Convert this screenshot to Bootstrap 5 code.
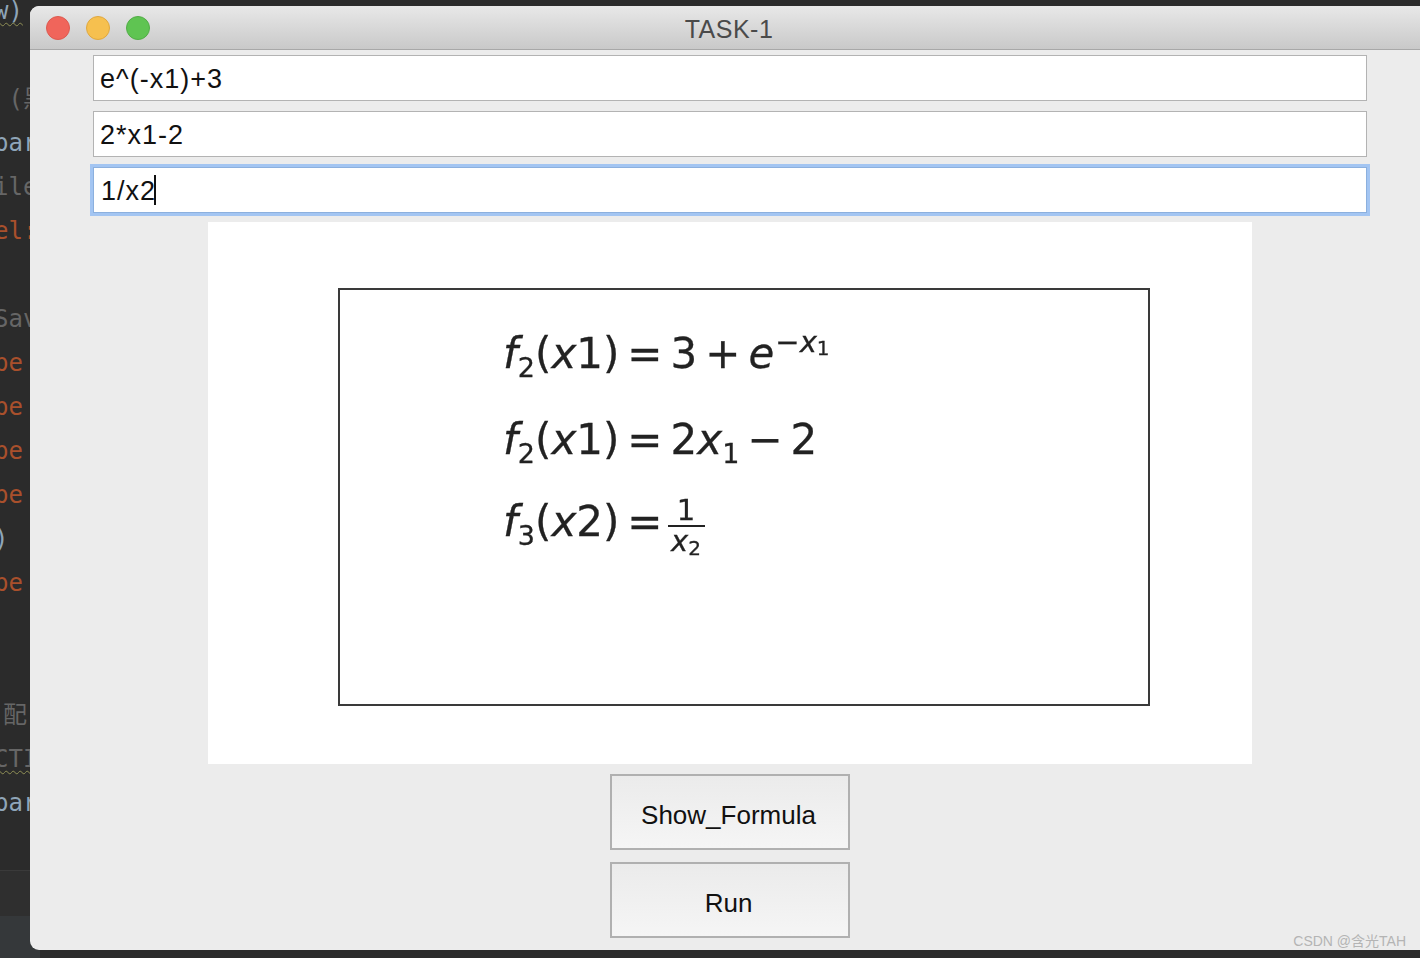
<!DOCTYPE html>
<html lang="zh">
<head>
  <meta charset="UTF-8">
  <meta name="viewport" content="width=device-width, initial-scale=1.0">
  <title>TASK-1</title>
  <link href="https://cdn.jsdelivr.net/npm/bootstrap@5.3.3/dist/css/bootstrap.min.css" rel="stylesheet">
  <style>
    html, body { height: 100%; margin: 0; overflow: hidden; background: #2b2b2b; }
    .desktop { position: relative; width: 1420px; height: 958px; overflow: hidden; background: #2b2b2b; }

    /* editor behind the window */
    .editor-code { position: absolute; left: -6px; top: -11px; width: 60px; font: 24px/44px "DejaVu Sans Mono", "Noto Sans CJK SC", monospace; }
    .editor-code div { height: 44px; white-space: pre; }
    .c-orange { color: #a9502c; }
    .c-gray { color: #666; }
    .c-blue { color: #8fa5b8; }
    .c-indent { padding-left: 9px; }
    .c-squig { text-decoration: underline wavy #8f8f55 1px; text-underline-offset: 3px; }
    .editor-foot { position: absolute; left: 0; top: 870px; width: 40px; height: 46px; background: #2f2f2f; border-top: 1px solid #3a3a3a; }
    .editor-foot2 { position: absolute; left: 0; top: 916px; width: 40px; height: 42px; background: #35383a; }

    /* window */
    .app-window { position: absolute; left: 30px; top: 6px; width: 1390px; height: 944px; background: #ececec; border-radius: 9px 0 0 9px; overflow: hidden; }
    .title-bar { height: 44px; position: relative; background: linear-gradient(#e8e8e8, #c9c9c9); border-bottom: 1px solid #a8a8a8; }
    .light { width: 24px; height: 24px; border-radius: 50%; border: 1px solid; }
    .light-red { background: #f0655b; border-color: #dd5a50; }
    .light-yellow { background: #f6c04f; border-color: #e0a83f; }
    .light-green { background: #5fc452; border-color: #52ad47; }
    .lights { padding-left: 16px; height: 43px; gap: 16px; }
    .title-text { position: absolute; left: 0; right: 0; top: 0; padding-left: 8px; text-align: center; font: 25px/46px "Liberation Sans", sans-serif; letter-spacing: .5px; color: #4a4a4a; }

    .form-area { padding: 5px 53px 0 63px; gap: 10px; }
    .task-input, .task-input:focus { height: 46px; padding: 2px 6px 0; border: 1px solid #b3b3b3; border-radius: 0; background: #fff; color: #111; box-shadow: none; font: 27px/44px "Liberation Sans", sans-serif; letter-spacing: 1px; }
    .task-active, .task-active:focus { border-color: #8cb0de; box-shadow: 0 0 0 3px #a3c5f2; padding: 0 7px; line-height: 46px; }
    .caret-bar { display: inline-block; width: 2px; height: 30px; margin-left: -2px; background: #111; vertical-align: -5px; }

    .figure-sheet { width: 1044px; height: 542px; margin: 9px 0 0 178px; background: #fff; padding: 66px 0 0 130px; }
    .plot-box { width: 812px; height: 418px; border: 2px solid #3a3a3a; padding-left: 163px; font-family: "DejaVu Sans", sans-serif; font-size: 42px; color: #222; line-height: 1; white-space: nowrap; }
    .math-line { height: 50px; display: flex; align-items: baseline; filter: blur(.35px); -webkit-text-stroke: .3px #222; }
    .math-1 { margin-top: 43px; }
    .math-2 { margin-top: 36px; }
    .math-3 { margin-top: 24px; }
    .math-line i { font-style: oblique; }
    .sub-s { font-size: 27px; position: relative; top: 9px; }
    .sup-s { font-size: 29px; position: relative; top: -16px; margin-left: 1px; }
    .sup-ss { font-size: 20px; position: relative; top: 3px; }
    .math-op { padding: 0 8px; }
    .frac { display: inline-flex; flex-direction: column; align-items: center; font-size: 29px; vertical-align: middle; position: relative; top: 3px; width: 37px; margin-left: -3px; }
    .frac-top { border-bottom: 2px solid #222; width: 100%; text-align: center; line-height: 29px; }
    .frac-bot { line-height: 28px; }
    .frac-bot span { font-size: 20px; position: relative; top: 4px; }

    .btn-stack { gap: 12px; margin-top: 10px; padding-left: 10px; }
    .task-btn, .task-btn:hover { width: 240px; height: 76px; padding: 6px 3px 0 0; border: 2px solid #b0b0b0; border-radius: 0; background: linear-gradient(#ebebeb, #f5f5f5); color: #111; font: 26px/1 "Liberation Sans", sans-serif; }
    .watermark { position: absolute; right: 14px; bottom: 0; font: 14px/18px "Liberation Sans", "Noto Sans CJK SC", sans-serif; color: #b4b4b4; }
  </style>
</head>
<body>
  <div class="desktop">
    <div class="editor-code">
      <div class="c-blue"><span class="c-squig">w)</span></div>
      <div></div>
      <div class="c-gray"> (黑</div>
      <div class="c-blue">par</div>
      <div class="c-gray">ile</div>
      <div class="c-orange">el:</div>
      <div></div>
      <div class="c-gray">Sav</div>
      <div class="c-orange">pe</div>
      <div class="c-orange">pe</div>
      <div class="c-orange">pe</div>
      <div class="c-orange">pe</div>
      <div class="c-blue">)</div>
      <div class="c-orange">pe</div>
      <div></div>
      <div></div>
      <div class="c-gray c-indent">配</div>
      <div class="c-gray"><span class="c-squig">CTI</span></div>
      <div class="c-blue">par</div>
    </div>
    <div class="editor-foot"></div>
    <div class="editor-foot2"></div>

    <div class="app-window d-flex flex-column">
      <div class="title-bar">
        <div class="lights d-flex align-items-center">
          <span class="light light-red"></span>
          <span class="light light-yellow"></span>
          <span class="light light-green"></span>
        </div>
        <div class="title-text">TASK-1</div>
      </div>

      <div class="form-area d-flex flex-column">
        <input class="form-control task-input" type="text" value="e^(-x1)+3">
        <input class="form-control task-input" type="text" value="2*x1-2">
        <div class="form-control task-input task-active">1/x2<span class="caret-bar"></span></div>
      </div>

      <div class="figure-sheet">
        <div class="plot-box">
          <div class="math-line math-1"><span><i>f</i><span class="sub-s">2</span>(<i>x</i>1)<span class="math-op">=</span>3<span class="math-op">+</span><i>e</i><span class="sup-s">−<i>x</i><span class="sup-ss">1</span></span></span></div>
          <div class="math-line math-2"><span><i>f</i><span class="sub-s">2</span>(<i>x</i>1)<span class="math-op">=</span>2<i>x</i><span class="sub-s">1</span><span class="math-op">−</span>2</span></div>
          <div class="math-line math-3"><span><i>f</i><span class="sub-s">3</span>(<i>x</i>2)<span class="math-op">=</span><span class="frac"><span class="frac-top">1</span><span class="frac-bot"><i>x</i><span>2</span></span></span></span></div>
        </div>
      </div>

      <div class="btn-stack d-flex flex-column align-items-center">
        <button class="btn task-btn" type="button">Show_Formula</button>
        <button class="btn task-btn" type="button">Run</button>
      </div>
      <div class="watermark">CSDN @含光TAH</div>
    </div>
  </div>
  <script src="https://cdn.jsdelivr.net/npm/bootstrap@5.3.3/dist/js/bootstrap.bundle.min.js"></script>
</body>
</html>
